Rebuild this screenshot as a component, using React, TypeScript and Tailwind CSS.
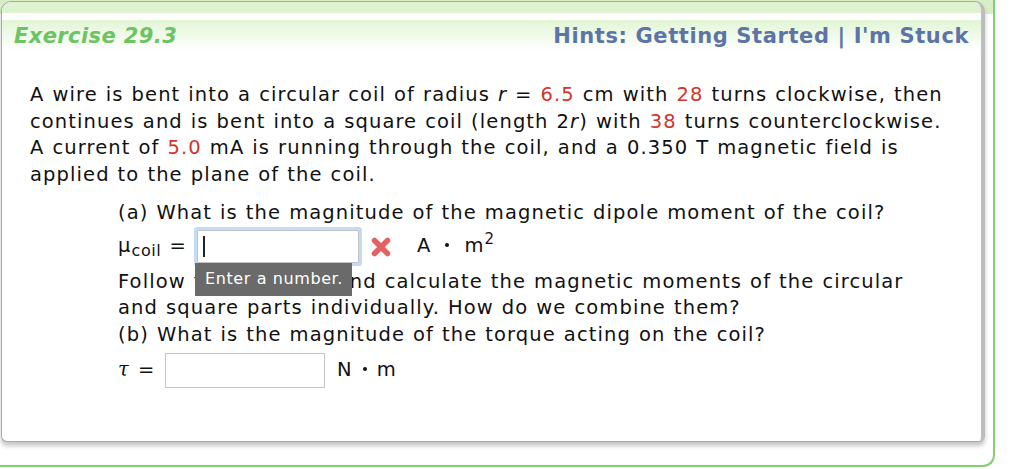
import React from "react";

function RedX() {
  return (
    <svg width="22" height="22" viewBox="0 0 22 22" className="shrink-0">
      <path d="M4.5 4.5 L17.5 17.5 M17.5 4.5 L4.5 17.5" stroke="#e46262" strokeWidth="5.5" strokeLinecap="round" />
    </svg>
  );
}

function Dot({ wide }: { wide?: boolean }) {
  return (
    <span
      className={
        wide
          ? "inline-block w-[4px] h-[4px] rounded-full bg-[#111] align-[5px] ml-[14px] mr-[15px]"
          : "inline-block w-[4px] h-[4px] rounded-full bg-[#111] align-[5px] mx-[10px]"
      }
    />
  );
}

export default function App() {
  const red = "text-[#d2352c]";
  return (
    <div className="w-[1024px] h-[469px] bg-white overflow-hidden font-['DejaVu_Sans',Verdana,sans-serif] text-[#111]">
      <div className="w-[995px] h-[467px] border-r-2 border-b-2 border-[#7fd26f] rounded-br-[12px] bg-[linear-gradient(to_bottom,#d7efc4_0px,#d7efc4_14px,#ffffff_14px)] pt-[1px]">
        <div className="ml-[1px] w-[984px] h-[441px] bg-white border border-[#a8a8a8] border-r-[4px] border-r-[#bdbdbd] rounded-t-[10px] rounded-b-[6px] shadow-[0_4px_4px_rgba(0,0,0,0.22)] overflow-hidden">
          <div className="h-[11px] bg-[#dff3d0]" />
          <div className="h-[7px] bg-white" />
          <div className="h-[31px] bg-gradient-to-b from-[#e2f5d5] to-white flex items-center justify-between pl-[12px] pr-[12px] pt-[3px]">
            <span className="italic font-bold text-[21px] text-[#6cc462] tracking-[0.4px]">Exercise 29.3</span>
            <span className="font-bold text-[21px] text-[#5d74a6] tracking-[0.6px]">Hints: Getting Started | I'm Stuck</span>
          </div>

          <div className="pl-[28px] pt-[31px] text-[19.5px] leading-[26.7px] tracking-[1.1px] [word-spacing:0.7px]">
            <p>
              A wire is bent into a circular coil of radius <i>r</i> = <span className={red}>6.5</span> cm with{" "}
              <span className={red}>28</span> turns clockwise, then
              <br />
              continues and is bent into a square coil (length 2<i>r</i>) with <span className={red}>38</span> turns
              counterclockwise.
              <br />
              A current of <span className={red}>5.0</span> mA is running through the coil, and a 0.350 T magnetic field
              is
              <br />
              applied to the plane of the coil.
            </p>

            <div className="ml-[88px] mt-[11px]">
              <p>(a) What is the magnitude of the magnetic dipole moment of the coil?</p>
              <div className="flex items-center h-[42px] pb-[2px]">
                <span className="w-[79px] whitespace-nowrap">
                  μ<span className="text-[16px] relative top-[4px] tracking-[0.6px]">coil</span> =
                </span>
                <div className="relative">
                  <div className="w-[162px] h-[33px] border border-[#c4c4c4] bg-white ring-[3px] ring-[#c2dbf7] rounded-[1px] flex items-center pl-[5px]">
                    <span className="w-[1.5px] h-[21px] bg-[#222]" />
                  </div>
                  <div className="absolute left-[-2px] top-[33px] w-[157px] h-[33px] bg-[#6a6a6a] text-white text-[16px] tracking-[0.6px] [word-spacing:0px] flex items-center pl-[10px] z-10 whitespace-nowrap">
                    Enter a number.
                  </div>
                </div>
                <span className="ml-[11px] flex">
                  <RedX />
                </span>
                <span className="ml-[25px] whitespace-nowrap">
                  A<Dot wide />m<span className="text-[15px] relative top-[-8px]">2</span>
                </span>
              </div>
              <p>
                Follow the example and calculate the magnetic moments of the circular
                <br />
                and square parts individually. How do we combine them?
                <br />
                (b) What is the magnitude of the torque acting on the coil?
              </p>
              <div className="flex items-center h-[44px]">
                <span className="w-[47px] whitespace-nowrap">
                  <span className="font-['DejaVu_Serif',serif] italic">τ</span> =
                </span>
                <div className="w-[160px] h-[35px] border border-[#c4c4c4] bg-white" />
                <span className="ml-[12px] whitespace-nowrap">
                  N<Dot />m
                </span>
              </div>
            </div>
          </div>
        </div>
      </div>
    </div>
  );
}
